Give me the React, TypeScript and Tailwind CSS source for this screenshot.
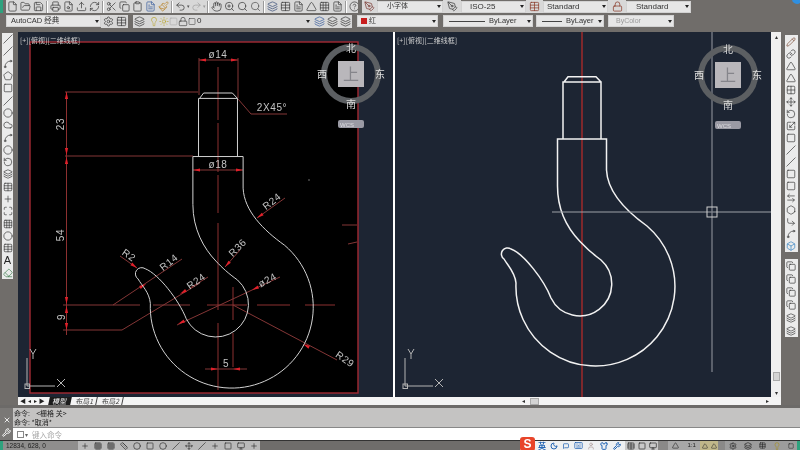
import React from "react";
import {
  File, FolderOpen, Save, Printer, FileSearch, Upload, RefreshCw, Scissors, Copy, Clipboard, Paintbrush,
  Undo2, Redo2, Hand, ZoomIn, Search, Layers, Table, FileText, Triangle, Grid3x3, HelpCircle, Settings,
  Lightbulb, Sun, Lock, Square, PenTool, Pentagon, Circle, Spline, RotateCcw, X, Wrench, Plus,
  Move, Maximize, Ruler, Monitor, Moon, MessageSquare, Shirt, Keyboard, User, Eraser,
  Slash, Link, Grid2x2, Box, CornerDownRight, Hexagon, ArrowLeftRight, Scaling, Cloud, Pencil,
} from "lucide-react";

const HOOK =
  "M564 82 L568 76.7 H596 L601 82 M563 139 V82 H601 V139 M557.5 186 V139 H606.5 V170 " +
  "C607.5 192 626 211 647 226 A79.5 79.5 0 1 1 516 283 C515 272 508 266 504 259 " +
  "A4 4 0 0 1 511 249 C524 254 544 280 551 298 A32 32 0 1 0 601 260 " +
  "C592 253.5 586 248 580 241.5 C568 229 557.5 210 557.5 186";

const CJK = "Noto Sans CJK SC, sans-serif";

function ViewCube({ x, y }: { x: number; y: number }) {
  const t = { textAnchor: "middle" as const, fontSize: 10, fill: "#dedede", fontFamily: CJK };
  return (
    <g transform={`translate(${x} ${y})`}>
      <circle cx="0" cy="0" r="27" fill="none" stroke="#5c5f62" strokeWidth="6" />
      <rect x="-13" y="-13" width="26" height="26" fill="#b9b7bb" />
      <text x="0" y="6" textAnchor="middle" fontSize="16" fill="#85858b" fontFamily={CJK}>上</text>
      <text x="0" y="-22" {...t}>北</text>
      <text x="0" y="34" {...t}>南</text>
      <text x="-29" y="4" {...t}>西</text>
      <text x="29" y="4" {...t}>东</text>
      <rect x="-13" y="46" width="26" height="8" rx="2" fill="#9a9aa4" />
      <text x="-11" y="52.5" fontSize="6" fill="#dcdce0" fontFamily="Liberation Sans, sans-serif">WCS</text>
    </g>
  );
}

function Ucs({ x, y }: { x: number; y: number }) {
  return (
    <g transform={`translate(${x} ${y})`} stroke="#b4b4b4" strokeWidth="1" fill="none">
      <path d="M2 -28 V0 H30" />
      <rect x="0" y="-2" width="4.5" height="4.5" />
      <path d="M32 -7 L40 1 M40 -7 L32 1" />
      <path d="M5 -37 L8 -32 L11 -37 M8 -32 V-27" />
    </g>
  );
}

const DL = "#843636";
const CL = "#8c3030";

function Dim({ x, y, t, r = 0 }: { x: number; y: number; t: string; r?: number }) {
  return (
    <text x={x} y={y} fontSize={10} fill="#c4c4c4" textAnchor="middle" letterSpacing="0.6" transform={r ? `rotate(${r} ${x} ${y})` : undefined} fontFamily="Liberation Sans, sans-serif">
      {t}
    </text>
  );
}

function LeftDrawing() {
  const o = (x: number) => x - 18;
  const q = (y: number) => y - 32;
  const L = (x1: number, y1: number, x2: number, y2: number, c = DL) => (
    <line x1={o(x1)} y1={q(y1)} x2={o(x2)} y2={q(y2)} stroke={c} strokeWidth="1" />
  );
  const A = (x: number, y: number, a: number) => (
    <path d="M0 0 L-7 -1.6 L-7 1.6 Z" fill="#e0202a" transform={`translate(${o(x)} ${q(y)}) rotate(${a})`} />
  );
  const T = (x: number, y: number, t: string, r = 0) => <Dim x={o(x)} y={q(y)} t={t} r={r} />;
  return (
    <svg width="375" height="365" className="block absolute inset-0">
      <rect x="12" y="10" width="328" height="351" fill="#000" stroke="#a32a33" strokeWidth="1.4" />
      {L(218, 67, 218, 120, CL)}
      {L(218, 123, 218, 172, CL)}
      {L(218, 175, 218, 213, CL)}
      {L(218, 223, 218, 310, CL)}
      {L(218, 323, 218, 390, CL)}
      {L(233, 287, 233, 320, CL)}
      {L(233, 333, 233, 367, CL)}
      {L(65, 92, 198, 92)}
      {L(65, 156, 193, 156)}
      {L(66.5, 92, 66.5, 335, CL)}
      {L(63, 305, 140, 305)}
      {L(153, 305, 190, 305)}
      {L(207, 305, 247, 305, CL)}
      {L(257, 305, 290, 305, CL)}
      {L(305, 305, 335, 305, CL)}
      {L(63, 330, 122, 330)}
      {L(122, 330, 200, 283)}
      {L(113, 305, 182, 259)}
      {L(177, 325, 280, 277)}
      {L(190, 288, 208, 277)}
      {L(233, 305, 337, 360)}
      {L(225, 267, 240, 250)}
      {L(199, 58, 199, 95)}
      {L(238, 58, 238, 98)}
      {L(199, 60, 238, 60)}
      {L(193, 170, 243, 170)}
      {L(238, 99, 251, 114)}
      {L(251, 114, 287, 114)}
      {L(257, 218, 285, 198)}
      {L(120, 256, 137, 268)}
      {L(205, 369, 247, 369)}
      {L(342, 225, 357, 225)}
      {L(348, 244, 357, 242)}
      {A(199, 60, 180)}
      {A(238, 60, 0)}
      {A(193, 170, 180)}
      {A(243, 170, 0)}
      {A(66.5, 92, 270)}
      {A(66.5, 155, 90)}
      {A(66.5, 157, 270)}
      {A(66.5, 304, 90)}
      {A(66.5, 306, 270)}
      {A(66.5, 330, 90)}
      {A(137, 268, 36)}
      {A(146, 284, -30)}
      {A(180, 294, 148)}
      {A(225, 267, 132)}
      {A(252, 290, 155)}
      {A(178, 324, 155)}
      {A(303, 344, 208)}
      {A(257, 218, 145)}
      {A(218, 369, 0)}
      {A(233, 369, 180)}
      {T(218, 58, "ø14")}
      {T(218, 168, "ø18")}
      {T(272, 111, "2X45°")}
      {T(64, 124, "23", -90)}
      {T(64, 235, "54", -90)}
      {T(65, 317, "9", -90)}
      {T(127, 258, "R2", 35)}
      {T(171, 265, "R14", -38)}
      {T(198, 284, "R24", -35)}
      {T(240, 250, "R36", -45)}
      {T(274, 204, "R24", -38)}
      {T(269, 283, "ø24", -28)}
      {T(343, 362, "R29", 35)}
      {T(226, 367, "5")}
      <g transform="translate(200 61) scale(1.025 1.02) translate(-582 -76.7)">
        <path d={HOOK} fill="none" stroke="#d2d2d2" strokeWidth="1" vectorEffect="non-scaling-stroke" />
      </g>
      <circle cx={o(309)} cy={q(180)} r="0.7" fill="#999" />
      <ViewCube x={333} y={42} />
      <Ucs x={7} y={354} />
    </svg>
  );
}

function RightDrawing() {
  const o = (x: number) => x - 395;
  const q = (y: number) => y - 32;
  return (
    <svg width="376" height="365" className="block absolute inset-0">
      <line x1={o(582)} y1="0" x2={o(582)} y2="365" stroke="#8a2a2c" strokeWidth="1.8" />
      <g transform="translate(-395 -32)">
        <path d={HOOK} fill="none" stroke="#f2f2f2" strokeWidth="1.5" />
      </g>
      <line x1={o(552)} y1={q(212)} x2="376" y2={q(212)} stroke="#9da1a7" strokeWidth="1.2" />
      <line x1={o(712)} y1="0" x2={o(712)} y2={q(372)} stroke="#858992" strokeWidth="1.2" />
      <rect x={o(707)} y={q(207)} width="10" height="10" fill="none" stroke="#d0d0d0" strokeWidth="1" />
      <ViewCube x={333} y={43} />
      <Ucs x={8} y={354} />
    </svg>
  );
}

type I = React.ComponentType<{ size?: number; strokeWidth?: number; className?: string }>;

function Ico({ I, c = "text-[#3c3c3c]", w = "w-[13px]" }: { I: I; c?: string; w?: string }) {
  return (
    <span className={`${w} h-[13px] flex items-center justify-center shrink-0 ${c}`}>
      <I size={11} strokeWidth={1.6} />
    </span>
  );
}

function Sep() {
  return <span className="w-[2px] h-[12px] mx-[1px] bg-[#9a9a9a] border-r border-white shrink-0" />;
}

function Combo({ w, children }: { w: string; children?: React.ReactNode }) {
  return (
    <div className={`${w} h-[12px] bg-[#e6e6e6] border border-[#d2d2d2] flex items-center pl-[3px] pr-[1px] shrink-0 text-[7px] text-[#333] font-['Liberation_Sans','Noto_Sans_CJK_SC',sans-serif] overflow-hidden`}>
      <span className="flex-1 flex items-center gap-[2px] whitespace-nowrap overflow-hidden">{children}</span>
      <span className="w-0 h-0 border-x-[2.5px] border-x-transparent border-t-[3px] border-t-[#222] ml-[2px]" />
    </div>
  );
}

function LineCombo({ w, line, t }: { w: string; line: string; t: string }) {
  return (
    <Combo w={w}>
      <span className={`${line} h-px bg-[#444] ml-[2px]`} />
      <span className="ml-[2px] text-[7.5px]">{t}</span>
    </Combo>
  );
}

const tool = "h-[13px] flex items-center bg-[#d8d8d8] shrink-0";

function Row1() {
  return (
    <div className="h-[13px] flex items-center shrink-0">
      <span className="w-[3px] h-full bg-[#2fa27e] mr-[3px]" />
      <div className={`${tool} w-[352px] overflow-hidden`}>
        {[File, FolderOpen, Save].map((X, i) => <Ico key={i} I={X} />)}
        <Sep />
        {[Printer, FileSearch, Upload, RefreshCw].map((X, i) => <Ico key={i} I={X} />)}
        <Sep />
        <Ico I={Scissors} /><Ico I={Copy} /><Ico I={Clipboard} /><Ico I={FileText} c="text-[#3b5f9e]" /><Ico I={Paintbrush} c="text-[#b9842c]" />
        <Sep />
        <Ico I={Undo2} /><span className="w-[6px] text-[#555] text-[5px] leading-none">▾</span><Ico I={Redo2} c="text-[#a0a0a0]" /><span className="w-[6px] text-[#999] text-[5px] leading-none">▾</span>
        <Sep />
        <Ico I={Hand} /><Ico I={ZoomIn} /><Ico I={Search} /><Ico I={Search} c="text-[#555]" />
        <Sep />
        <Ico I={Layers} c="text-[#3b4f78]" /><Ico I={Table} /><Ico I={FileText} /><Ico I={Triangle} /><Ico I={Grid3x3} /><Ico I={FileText} />
        <Sep />
        <Ico I={HelpCircle} />
      </div>
      <div className={`${tool} w-[15px] ml-[4px] justify-center`}><Ico I={PenTool} c="text-[#7a3a33]" /></div>
      <Combo w="w-[66px]"><span className="ml-[6px]">小字体</span></Combo>
      <div className={`${tool} w-[18px] justify-center`}><Ico I={PenTool} /></div>
      <Combo w="w-[65px]"><span className="ml-[5px] text-[8px]">ISO-25</span></Combo>
      <div className={`${tool} w-[17px] justify-center`}><Ico I={Table} c="text-[#8a3b2a]" /></div>
      <Combo w="w-[65px]"><span className="ml-[0px] text-[8px]">Standard</span></Combo>
      <div className={`${tool} w-[18px] justify-center`}><Ico I={Lock} c="text-[#8a3b2a]" /></div>
      <Combo w="w-[65px]"><span className="ml-[6px] text-[8px]">Standard</span></Combo>
    </div>
  );
}

function Row2() {
  return (
    <div className="h-[12px] mt-[2px] mb-[5px] flex items-center pl-[6px] shrink-0">
      <Combo w="w-[95px]"><span className="ml-[1px] text-[7.5px]">AutoCAD 经典</span></Combo>
      <div className={`${tool} w-[27px] pl-[1px]`}><Ico I={Settings} /><Ico I={Table} /></div>
      <span className="w-[5px]" />
      <div className={`${tool} w-[219px]`}>
        <Ico I={Layers} />
        <span className="w-[3px]" />
        <Ico I={Lightbulb} c="text-[#b8a52c]" w="w-[10px]" />
        <Ico I={Sun} c="text-[#b8a52c]" w="w-[10px]" />
        <Ico I={Square} c="text-[#aaa]" w="w-[9px]" />
        <Ico I={Lock} w="w-[10px]" />
        <Ico I={Square} w="w-[8px]" />
        <span className="text-[8px] text-[#333] ml-[1px] flex-1">0</span>
        <span className="w-0 h-0 border-x-[2.5px] border-x-transparent border-t-[3px] border-t-[#222] mr-[3px]" />
        <Ico I={Layers} c="text-[#3b5f9e]" /><Ico I={Layers} /><Ico I={Layers} />
      </div>
      <span className="w-[5px]" />
      <Combo w="w-[81px]">
        <span className="w-[6px] h-[6px] bg-[#c81e1e]" />
        <span>红</span>
      </Combo>
      <span className="w-[5px]" />
      <LineCombo w="w-[90px]" line="w-[36px]" t="ByLayer" />
      <span className="w-[3px]" />
      <LineCombo w="w-[68px]" line="w-[20px]" t="ByLayer" />
      <span className="w-[4px]" />
      <Combo w="w-[66px]"><span className="ml-[4px] text-[#999]">ByColor</span></Combo>
    </div>
  );
}

const leftIcons: I[] = [Slash, Slash, Spline, Pentagon, Square, Slash, Circle, Cloud, Spline, Circle, RotateCcw, Layers, Table, Plus, Maximize, Grid3x3, Circle, Table];
const rightA: I[] = [Pencil, Link, Triangle, Triangle, Grid2x2, Move, RotateCcw, Scaling, Square, Slash, Slash, Square, Square, ArrowLeftRight, Hexagon, CornerDownRight, Spline, Box];
const rightB: I[] = [Copy, Copy, Copy, Copy, Layers, Layers];

function VIcon({ I, c = "text-[#333]", h = "h-[12.3px]" }: { I: I; c?: string; h?: string }) {
  return (
    <span className={`${h} flex items-center justify-center ${c}`}>
      <I size={10} strokeWidth={1.6} />
    </span>
  );
}

function LeftBar() {
  return (
    <div className="w-[18px] shrink-0 pl-[2px] pt-[1px]">
      <div className="w-[11px] bg-[#ebebeb] flex flex-col">
        {leftIcons.map((X, i) => <VIcon key={i} I={X} />)}
        <span className="h-[12.3px] flex items-center justify-center text-[11px] leading-none text-[#222]">A</span>
        <VIcon I={Eraser} c="text-[#3a7a4a]" />
      </div>
    </div>
  );
}

function RightBar() {
  return (
    <div className="w-[19px] shrink-0 pt-[3px] pl-[4px] flex flex-col gap-[7px]">
      <div className="w-[12.5px] bg-[#ebebeb] flex flex-col pt-[1px]">
        {rightA.map((X, i) => (
          <VIcon key={i} I={X} h="h-[12px]" c={i === 17 ? "text-[#2e7fc1]" : i === 0 ? "text-[#7a4a33]" : "text-[#333]"} />
        ))}
      </div>
      <div className="w-[12.5px] bg-[#ebebeb] flex flex-col">
        {rightB.map((X, i) => <VIcon key={i} I={X} h="h-[13px]" />)}
      </div>
    </div>
  );
}

const vpLabel = "absolute top-[4px] left-[2px] text-[7px] leading-[9px] text-[#cfcfcf] font-['Noto_Sans_CJK_SC',sans-serif] whitespace-nowrap";

function Tabs() {
  return (
    <div className="h-[8px] shrink-0 bg-[#f4f4f4] flex items-center text-[7px] leading-[8px] text-[#444] font-['Noto_Sans_CJK_SC',sans-serif]">
      <span className="w-[29px] flex items-center justify-around px-[1px] text-[6px] text-[#222]">
        <span>◀</span><span>◂</span><span>▸</span><span>▶</span>
      </span>
      <span className="h-[8px] ml-[2px] px-[4px] bg-[#1c1c1c] text-white -skew-x-12">模型</span>
      <span className="ml-[3px] px-[2px] border-r border-[#444] -skew-x-12">布局1</span>
      <span className="ml-[3px] px-[2px] border-r border-[#444] -skew-x-12">布局2</span>
      <span className="flex-1" />
      <span className="w-[12px] text-center text-[6px] text-[#333]">◂</span>
      <span className="w-[9px] h-[7px] ml-[1px] bg-[#d4d4d4] border border-[#aaa]" />
      <span className="w-[222px]" />
      <span className="w-[12px] text-center text-[6px] text-[#333]">▸</span>
      <span className="w-[8px]" />
    </div>
  );
}

function Command() {
  return (
    <div className="shrink-0 flex flex-col font-['Noto_Sans_CJK_SC',sans-serif]">
      <div className="h-[3px] bg-[#6c6a68]" />
      <div className="h-[32px] flex">
        <div className="w-[13px] bg-[#7a7876] flex flex-col items-center justify-end text-white pb-[3px] gap-[4px] shrink-0">
          <X size={8} strokeWidth={2.5} />
          <Wrench size={9} strokeWidth={2.5} />
        </div>
        <div className="flex-1 flex flex-col">
          <div className="h-[19px] bg-[#c4c3c2] text-[7px] leading-[9px] text-[#222] pl-[1px] pt-[1px]">
            <div className="whitespace-pre">命令:    &lt;栅格 关&gt;</div>
            <div className="whitespace-pre">命令: *取消*</div>
          </div>
          <div className="h-[13px] bg-white flex items-center pl-[4px] text-[7.5px] leading-[9px] text-[#a8a8a8] border-t border-[#888]">
            <span className="w-[7px] h-[7px] border border-[#888] mr-[1px]" />
            <span className="text-[#666] text-[6px] mr-[4px]">▾</span>
            <span>键入命令</span>
          </div>
        </div>
      </div>
    </div>
  );
}

function StatusBar() {
  return (
    <div className="h-[10px] shrink-0 bg-[#6f6d6b] border-t border-[#333] flex items-center text-[#222]">
      <span className="w-[3px] h-full bg-[#2fa27e]" />
      <span className="w-[75px] bg-[#8f8e8d] h-full text-[6.5px] leading-[9px] pl-[3px] whitespace-nowrap">12834, 628, 0</span>
      <div className="h-full flex items-center bg-[#b9b9b9] w-[182px]">
        {[Plus, Grid3x3, Grid3x3, Ruler, Circle, Square, Circle, Slash, Move, Slash, Plus, Square, Monitor, Plus].map((X, i) => (
          <span key={i} className="w-[13px] h-full flex items-center justify-center"><X size={8} strokeWidth={1.8} /></span>
        ))}
      </div>
      <span className="flex-1" />
      <div className="w-[105px] h-full bg-[#eef0f2] flex items-center relative">
        <span className="absolute left-0 -top-[4px] w-[15px] h-[14px] rounded-[3px] bg-[#e8452a] text-white text-[12px] leading-[14px] font-bold text-center">S</span>
        <span className="ml-[18px] text-[8px] leading-[9px] text-[#2466b5] font-bold font-['Noto_Sans_CJK_SC',sans-serif]">英</span>
        <span className="flex-1 flex items-center justify-around text-[#2466b5] px-[2px]">
          <Moon size={8} strokeWidth={3} /><MessageSquare size={6} strokeWidth={3} /><Keyboard size={9} strokeWidth={2} /><User size={8} strokeWidth={2} className="text-[#a99]" /><Shirt size={8} strokeWidth={3} /><Wrench size={8} strokeWidth={3} />
        </span>
      </div>
      <div className="w-[33px] h-full bg-[#c8c8c8] flex items-center justify-around">
        <Table size={8} /><Square size={8} /><Monitor size={8} />
      </div>
      <span className="w-[10px] h-full bg-[#8a8988]" />
      <div className="w-[32px] h-full bg-[#a8a8a8] flex items-center justify-around text-[6px] leading-[9px]">
        <Triangle size={7} /><span>1:1</span>
      </div>
      <div className="w-[18px] h-full bg-[#c0b78a] flex items-center justify-around"><Triangle size={6} /><Triangle size={6} /></div>
      <span className="w-[7px] h-full bg-[#8a8988]" />
      <div className="w-[72px] h-full flex items-center justify-around bg-[#9c9c9c]">
        <Settings size={8} /><Layers size={8} /><Table size={7} /><Lightbulb size={8} className="text-[#a68f1f]" /><Square size={6} />
      </div>
      <span className="w-[3px] h-full bg-[#2fa27e]" />
    </div>
  );
}

export default function App() {
  return (
    <div className="relative w-[800px] h-[450px] flex flex-col overflow-hidden bg-[#706d6a] blur-[0.4px] font-['Liberation_Sans',sans-serif]">
      <span className="absolute -top-[6px] -right-[2px] w-[10px] h-[10px] rounded-full bg-[#2f8fe0]" />
      <Row1 />
      <Row2 />
      <div className="flex-1 flex min-h-0">
        <LeftBar />
        <div className="w-[763px] flex flex-col min-h-0 bg-[#f4f4f4]">
          <div className="flex-1 flex min-h-0">
            <div className="relative w-[375px] bg-[#1d2533] shrink-0 overflow-hidden">
              <LeftDrawing />
              <span className={vpLabel}>[+][俯视][二维线框]</span>
            </div>
            <div className="w-[2px] bg-white shrink-0" />
            <div className="relative w-[376px] bg-[#1d2533] shrink-0 overflow-hidden">
              <RightDrawing />
              <span className={vpLabel}>[+][俯视][二维线框]</span>
            </div>
            <div className="w-[10px] bg-[#f0f0f0] flex flex-col items-center text-[6px] text-[#333] leading-[8px] pt-[1px]">
              <span>▴</span>
              <span className="flex-1" />
              <span className="w-[7px] h-[9px] bg-[#d4d4d4] border border-[#aaa]" />
              <span className="h-[8px]" />
              <span>▾</span>
            </div>
          </div>
          <Tabs />
        </div>
        <RightBar />
      </div>
      <Command />
      <StatusBar />
    </div>
  );
}
